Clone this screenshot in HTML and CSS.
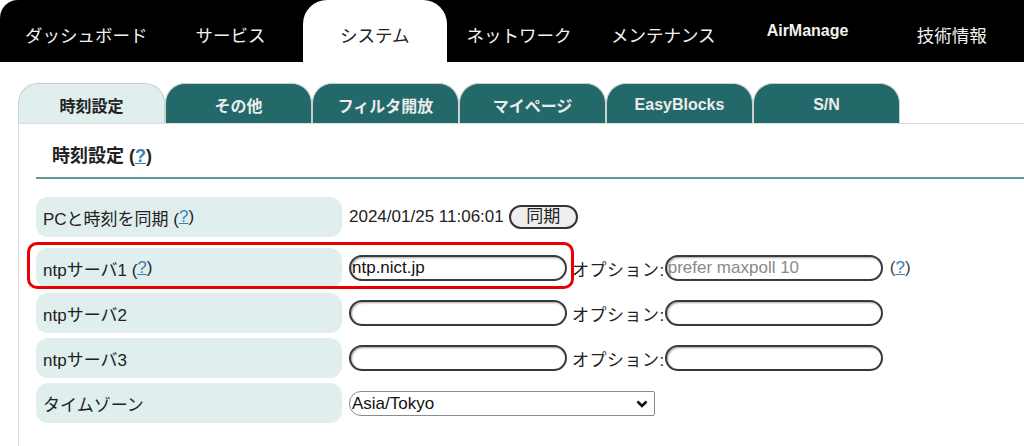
FILE: index.html
```html
<!DOCTYPE html>
<html>
<head>
    <meta charset="utf-8">
    <link rel="stylesheet" href="styles.css">
</head>
<body>
    <div class="nav">
        <div class="nav-tab">ダッシュボード</div>
        <div class="nav-tab">サービス</div>
        <div class="nav-tab active">システム</div>
        <div class="nav-tab">ネットワーク</div>
        <div class="nav-tab">メンテナンス</div>
        <div class="nav-tab latin">AirManage</div>
        <div class="nav-tab">技術情報</div>
    </div>

    <div class="subnav">
        <div class="sub-tab active">時刻設定</div>
        <div class="sub-tab">その他</div>
        <div class="sub-tab">フィルタ開放</div>
        <div class="sub-tab">マイページ</div>
        <div class="sub-tab">EasyBlocks</div>
        <div class="sub-tab">S/N</div>
    </div>

    <div class="panel">
        <div class="section">
            <div class="heading">時刻設定 (<a class="help">?</a>)</div>

            <div class="rows">
                <div class="row first">
                    <div class="label">PCと時刻を同期&nbsp;(<a class="help">?</a>)</div>
                    <div class="value">
                        <span>2024/01/25 11:06:01</span>
                        <button class="sync">同期</button>
                    </div>
                </div>
                <div class="row">
                    <div class="label">ntpサーバ1&nbsp;(<a class="help">?</a>)</div>
                    <div class="value">
                        <input type="text" class="field" value="ntp.nict.jp">
                        <span class="opt">オプション:</span>
                        <input type="text" class="field" placeholder="prefer maxpoll 10">
                        <span class="tail">(<a class="help">?</a>)</span>
                    </div>
                </div>
                <div class="row">
                    <div class="label">ntpサーバ2</div>
                    <div class="value">
                        <input type="text" class="field">
                        <span class="opt">オプション:</span>
                        <input type="text" class="field">
                    </div>
                </div>
                <div class="row">
                    <div class="label">ntpサーバ3</div>
                    <div class="value">
                        <input type="text" class="field">
                        <span class="opt">オプション:</span>
                        <input type="text" class="field">
                    </div>
                </div>
                <div class="row">
                    <div class="label">タイムゾーン</div>
                    <div class="value">
                        <span class="select-wrap">
                            <select class="zone">
                                <option>Asia/Tokyo</option>
                            </select>
                            <svg class="chevron" width="12" height="8" viewBox="0 0 12 8">
                                <path d="M1.5 1.5 L6 6 L10.5 1.5" fill="none" stroke="#111" stroke-width="2.6"/>
                            </svg>
                        </span>
                    </div>
                </div>

                <div class="highlight"></div>
            </div>
        </div>
    </div>
</body>
</html>
```

FILE: styles.css
```css
body {
    margin: 0;
    background: #fff;
    font-family: "Liberation Sans", "Noto Sans CJK JP", sans-serif;
    font-size: 17px;
    color: #222;
}

/* top navigation */
.nav {
    display: flex;
    height: 62px;
    padding-left: 14px;
    background: #000;
    border-top-left-radius: 18px;
}
.nav-tab {
    width: 146px;
    display: flex;
    align-items: center;
    justify-content: center;
    padding-top: 6px;
    box-sizing: border-box;
    font-size: 17.5px;
    color: #f2f2f2;
}
.nav-tab.latin {
    padding-top: 0;
    font-weight: bold;
    font-size: 16px;
}
.nav-tab.active {
    background: #fff;
    color: #222;
    border-radius: 24px 24px 0 0;
}

/* second level tabs */
.subnav {
    display: flex;
    margin: 21px 0 0 18px;
}
.sub-tab {
    width: 147px;
    height: 40px;
    box-sizing: border-box;
    display: flex;
    align-items: center;
    justify-content: center;
    padding-top: 2px;
    background: #23696a;
    color: #ececec;
    font-size: 16px;
    font-weight: bold;
    border: 1px solid #c8d0d0;
    border-bottom: none;
    border-radius: 20px 20px 0 0;
}
.sub-tab.active {
    background: #e0eeee;
    color: #222;
}

/* content */
.panel {
    margin-left: 18px;
    border-top: 1px solid #dcdcdc;
    border-left: 1px solid #dcdcdc;
    height: 330px;
}
.section {
    padding-left: 17px;
}
.heading {
    padding: 21px 0 9px 16px;
    line-height: 23px;
    font-size: 18px;
    font-weight: bold;
    border-bottom: 2px solid #5f9a98;
}
.help {
    color: #3a7fb5;
    text-decoration: underline;
}

.rows {
    position: relative;
    margin-top: 18px;
    display: flex;
    flex-direction: column;
    gap: 5px;
}
.row {
    display: flex;
    align-items: center;
}
.row.first {
    margin-bottom: 6px;
}
.label {
    flex-shrink: 0;
    width: 306px;
    height: 40px;
    box-sizing: border-box;
    padding-left: 7px;
    display: flex;
    align-items: center;
    background: #e0eeee;
    border-radius: 12px;
}
.value {
    display: flex;
    align-items: center;
    margin-left: 7px;
    white-space: nowrap;
}
.value > * {
    flex-shrink: 0;
}

.sync {
    margin-left: 5px;
    width: 69px;
    height: 24px;
    padding: 0;
    line-height: 20px;
    border: 2px solid #333;
    border-radius: 12px;
    background: #eee;
    font-family: inherit;
    font-size: 17px;
    color: #222;
}

.field {
    width: 218px;
    height: 26px;
    box-sizing: border-box;
    padding: 0 1px;
    border: 2px solid #3a3a3a;
    border-radius: 13px;
    box-shadow: inset 1px 1px 2px rgba(0, 0, 0, 0.35);
    font-family: inherit;
    font-size: 17px;
    color: #111;
    outline: none;
}
.field::placeholder {
    color: #8a8a8a;
}
.opt {
    margin-left: 5px;
    letter-spacing: 0.5px;
}
.tail {
    margin-left: 7px;
    color: #444;
}

.select-wrap {
    position: relative;
    display: inline-block;
    margin-top: 1px;
}
.zone {
    appearance: none;
    width: 306px;
    height: 25px;
    padding: 0 0 0 2px;
    border: 1px solid #8a8a8a;
    border-radius: 12px 2px 2px 12px;
    background: #fff;
    font-family: inherit;
    font-size: 17px;
    color: #111;
}
.chevron {
    position: absolute;
    right: 7px;
    top: 9px;
    pointer-events: none;
}

.highlight {
    position: absolute;
    left: -9px;
    top: 45px;
    width: 547px;
    height: 47px;
    box-sizing: border-box;
    border: 3px solid #e60000;
    border-radius: 10px;
    pointer-events: none;
}
```
